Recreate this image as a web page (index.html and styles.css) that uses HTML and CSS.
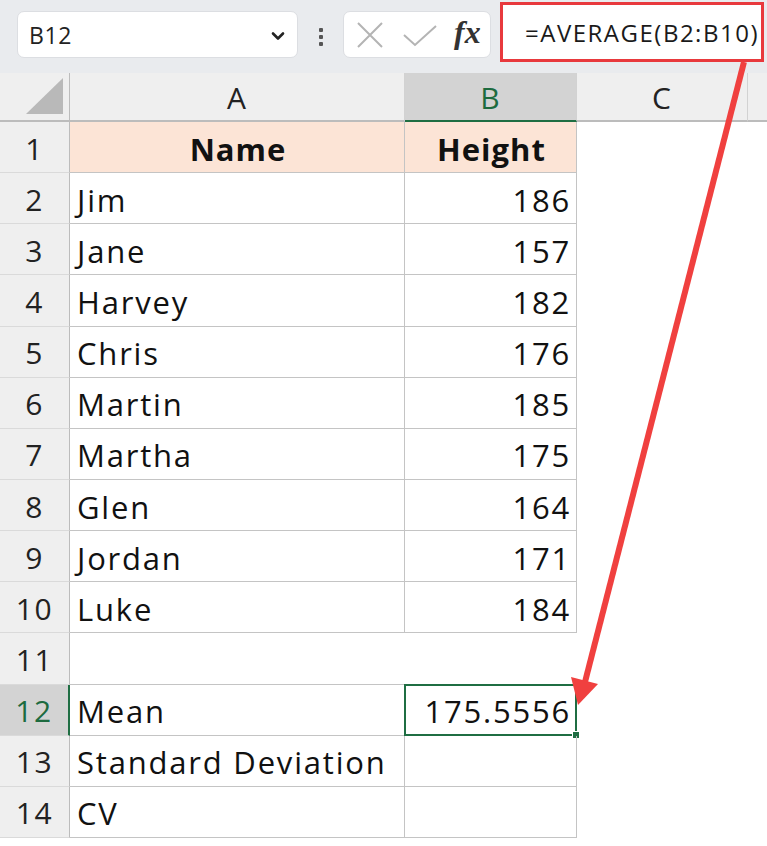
FILE: index.html
```html
<!DOCTYPE html>
<html>
<head>
<meta charset="utf-8">
<link rel="stylesheet" href="styles.css">
</head>
<body>
<div class="page">
  <div class="toolbar">
    <div class="namebox">
      <span class="nb-text">B12</span>
      <svg class="chev" width="14" height="10" viewBox="0 0 14 10"><path d="M2 2.5 L7 7.5 L12 2.5" fill="none" stroke="#222" stroke-width="2.6" stroke-linecap="round" stroke-linejoin="round"/></svg>
    </div>
    <div class="dots"><span></span><span></span><span></span></div>
    <div class="fxbox">
      <svg class="ico-x" width="28" height="28" viewBox="0 0 28 28"><path d="M2 2 L26 26 M26 2 L2 26" stroke="#b4b4b4" stroke-width="2" fill="none"/></svg>
      <svg class="ico-check" width="36" height="24" viewBox="0 0 36 24"><path d="M2 11 L13 21 L34 2" stroke="#b4b4b4" stroke-width="2" fill="none"/></svg>
      <span class="fx">fx</span>
    </div>
    <div class="formula">=AVERAGE(B2:B10)</div>
  </div>

  <div class="sheet">
    <div class="ch corner"><span class="tri"></span></div>
    <div class="ch">A</div>
    <div class="ch ch-sel">B</div>
    <div class="ch">C</div>
    <div class="ch ch-last"></div>

    <div class="rh">1</div><div class="c bd hdr">Name</div><div class="c bd hdr">Height</div><div class="c"></div><div class="c"></div>
    <div class="rh">2</div><div class="c bd">Jim</div><div class="c bd num">186</div><div class="c"></div><div class="c"></div>
    <div class="rh">3</div><div class="c bd">Jane</div><div class="c bd num">157</div><div class="c"></div><div class="c"></div>
    <div class="rh">4</div><div class="c bd">Harvey</div><div class="c bd num">182</div><div class="c"></div><div class="c"></div>
    <div class="rh">5</div><div class="c bd">Chris</div><div class="c bd num">176</div><div class="c"></div><div class="c"></div>
    <div class="rh">6</div><div class="c bd">Martin</div><div class="c bd num">185</div><div class="c"></div><div class="c"></div>
    <div class="rh">7</div><div class="c bd">Martha</div><div class="c bd num">175</div><div class="c"></div><div class="c"></div>
    <div class="rh">8</div><div class="c bd">Glen</div><div class="c bd num">164</div><div class="c"></div><div class="c"></div>
    <div class="rh">9</div><div class="c bd">Jordan</div><div class="c bd num">171</div><div class="c"></div><div class="c"></div>
    <div class="rh">10</div><div class="c bd">Luke</div><div class="c bd num">184</div><div class="c"></div><div class="c"></div>
    <div class="rh">11</div><div class="c bb"></div><div class="c bb"></div><div class="c"></div><div class="c"></div>
    <div class="rh rh-sel">12</div><div class="c bd">Mean</div><div class="c bd num sel">175.5556<span class="handle"></span></div><div class="c"></div><div class="c"></div>
    <div class="rh">13</div><div class="c bd">Standard Deviation</div><div class="c bd num"></div><div class="c"></div><div class="c"></div>
    <div class="rh">14</div><div class="c bd">CV</div><div class="c bd num"></div><div class="c"></div><div class="c"></div>
  </div>

  <svg class="arrow" width="767" height="846" viewBox="0 0 767 846">
    <line x1="744" y1="62" x2="585" y2="682" stroke="#f0403f" stroke-width="6"/>
    <polygon points="578,705 571,677 598,684" fill="#f0403f"/>
  </svg>
</div>
</body>
</html>
```

FILE: styles.css
```css
html, body {
  margin: 0;
  padding: 0;
  background: #ffffff;
}
.page {
  position: relative;
  width: 767px;
  height: 846px;
  overflow: hidden;
  font-family: "Open Sans", "Lato", sans-serif;
  color: #111;
}
.toolbar {
  height: 73px;
  background: #e9ebee;
  display: flex;
  align-items: flex-start;
  box-sizing: border-box;
}
.namebox {
  margin-left: 17px;
  margin-top: 11px;
  width: 281px;
  height: 47px;
  box-sizing: border-box;
  background: #fff;
  border: 1px solid #dcdee2;
  border-radius: 7px;
  display: flex;
  align-items: center;
  justify-content: space-between;
  padding: 0 12px 0 11px;
}
.nb-text {
  font-size: 23px;
  letter-spacing: 0.6px;
  color: #222;
}
.chev { margin-top: 2px; }
.dots {
  width: 45px;
  height: 73px;
  display: flex;
  flex-direction: column;
  align-items: center;
  justify-content: center;
  gap: 3px;
}
.dots span {
  width: 4px;
  height: 4px;
  background: #555;
  border-radius: 1px;
}
.fxbox {
  margin-top: 11px;
  width: 148px;
  height: 47px;
  box-sizing: border-box;
  background: #fff;
  border: 1px solid #dcdee2;
  border-radius: 7px;
  display: flex;
  align-items: center;
  padding-left: 12px;
}
.ico-x { margin-right: 18px; }
.ico-check { margin-right: 16px; margin-top: 2px; }
.fx {
  font-family: "Liberation Serif", serif;
  font-style: italic;
  font-weight: bold;
  font-size: 32px;
  color: #333;
  margin-top: -4px;
}
.formula {
  margin-left: 9px;
  margin-top: 2px;
  width: 264px;
  height: 60px;
  box-sizing: border-box;
  border: 3px solid #e8393d;
  background: #fff;
  display: flex;
  align-items: center;
  padding-left: 22px;
  font-size: 24px;
  letter-spacing: 1.5px;
  color: #1a1a1a;
  white-space: nowrap;
}
.sheet {
  display: grid;
  grid-template-columns: 70px 335px 172px 171px 1fr;
  grid-template-rows: 49px repeat(14, 51.15px);
}
.ch {
  background: #efefef;
  border-bottom: 2px solid #bcbcbc;
  border-right: 1px solid #d2d2d2;
  box-sizing: border-box;
  display: flex;
  align-items: center;
  justify-content: center;
  font-size: 30px;
  letter-spacing: 1px;
  color: #222;
  padding-top: 2px;
}
.corner {
  position: relative;
  border-right: 1px solid #bcbcbc;
}
.tri {
  position: absolute;
  right: 6px;
  bottom: 6px;
  width: 0;
  height: 0;
  border-left: 37px solid transparent;
  border-bottom: 36px solid #b9b9b9;
}
.ch-sel {
  background: #d3d3d3;
  color: #1d6b3f;
  border-bottom: 2px solid #1f6e43;
}
.ch-last { border-right: none; }
.rh {
  background: #efefef;
  border-right: 1px solid #bcbcbc;
  border-bottom: 1px solid #dadada;
  box-sizing: border-box;
  display: flex;
  align-items: center;
  justify-content: center;
  font-size: 30px;
  letter-spacing: 1.5px;
  color: #222;
  padding-top: 2px;
}
.rh-sel {
  background: #d3d3d3;
  color: #1d6b3f;
  border-right: 2px solid #1f6e43;
}
.c {
  box-sizing: border-box;
  display: flex;
  align-items: center;
  font-size: 31px;
  letter-spacing: 1.8px;
  padding: 3px 5px 0 7px;
  white-space: nowrap;
  position: relative;
}
.bd {
  border-right: 1px solid #c4c4c4;
  border-bottom: 1px solid #c4c4c4;
}
.bb {
  border-bottom: 1px solid #c4c4c4;
}
.hdr {
  background: #fce4d6;
  font-weight: bold;
  letter-spacing: 1px;
  justify-content: center;
}
.num {
  justify-content: flex-end;
}
.sel {
  border: 2px solid #1f6e43;
  margin: -1px 0 0 -1px;
  padding-right: 4px;
}
.handle {
  position: absolute;
  right: -5px;
  bottom: -5px;
  width: 8px;
  height: 8px;
  background: #1f6e43;
  border: 1px solid #fff;
  box-sizing: border-box;
}
.arrow {
  position: absolute;
  left: 0;
  top: 0;
  pointer-events: none;
}
```
